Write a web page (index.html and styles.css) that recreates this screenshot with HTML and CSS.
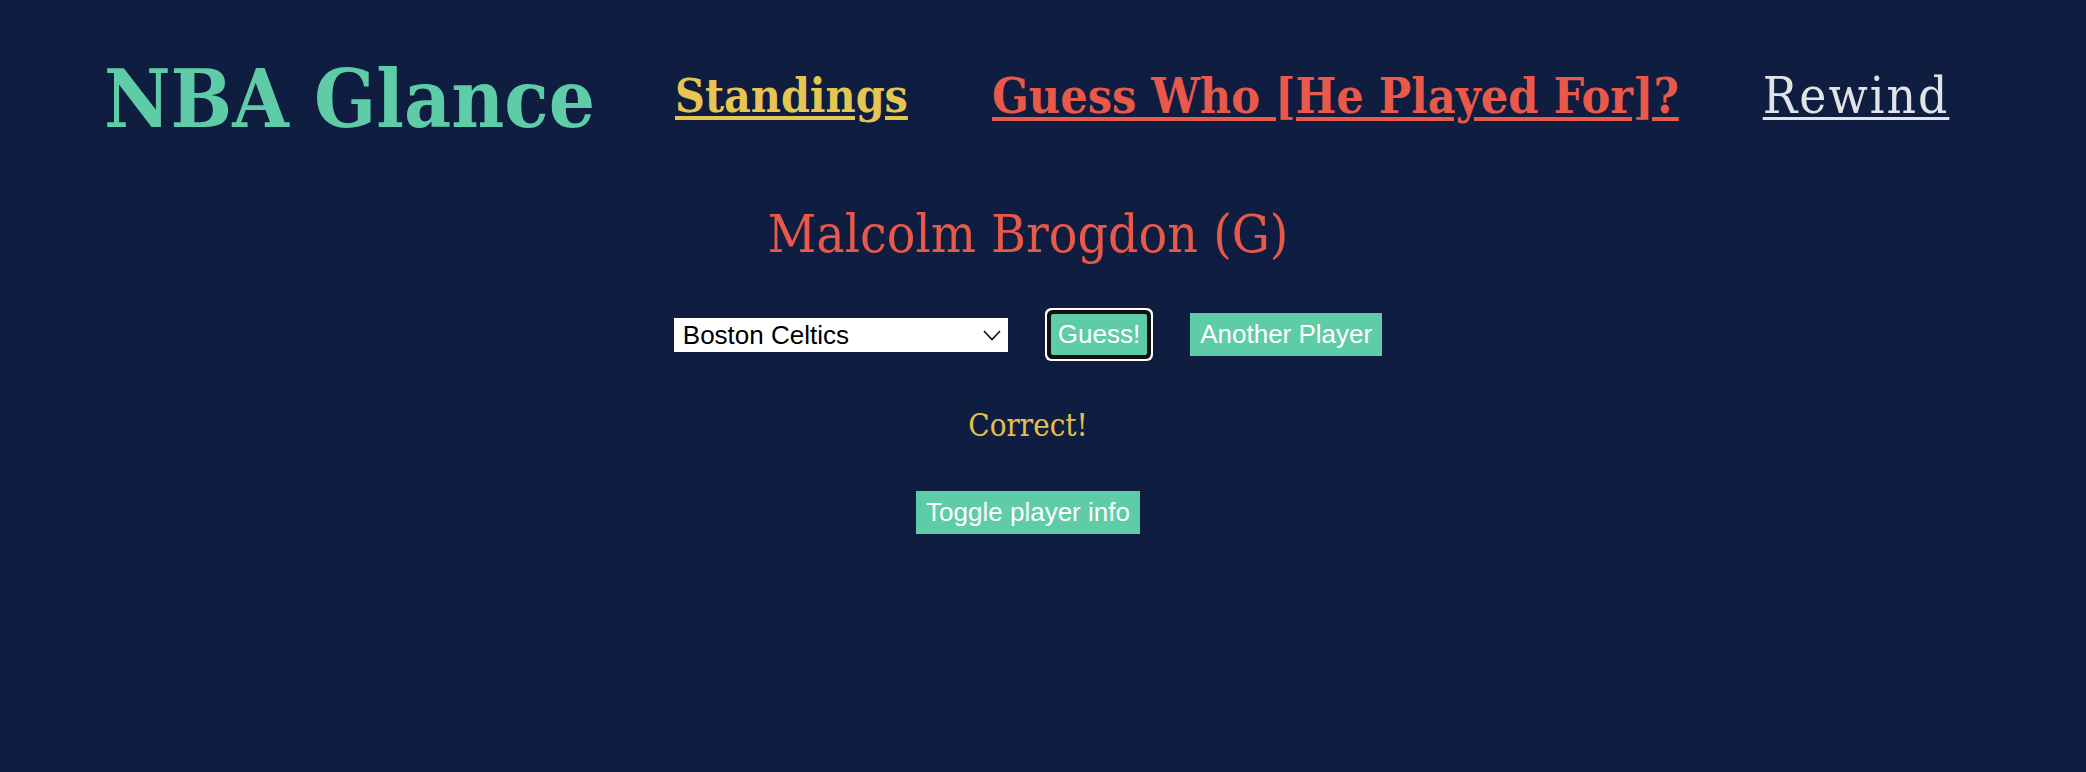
FILE: index.html
```html
<!DOCTYPE html>
<html>
<head>
    <title>NBA Glance</title>
    <link rel="stylesheet" href="styles.css">
</head>
<body>
    <div class="header">
        <h1 class="logo">NBA Glance</h1>
        <nav class="nav">
            <a href="#" class="nav-standings">Standings</a>
            <a href="#" class="nav-guess">Guess Who [He Played For]?</a>
            <a href="#" class="nav-rewind">Rewind</a>
        </nav>
    </div>

    <div class="game">
        <h2 class="player">Malcolm Brogdon (G)</h2>

        <div class="controls">
            <span class="select-wrap">
                <select id="team">
                    <option>Boston Celtics</option>
                    <option>Milwaukee Bucks</option>
                    <option>Indiana Pacers</option>
                </select>
                <svg class="chevron" width="18" height="11" viewBox="0 0 18 11">
                    <path d="M1 1 L9 9.5 L17 1" fill="none" stroke="#111" stroke-width="1.6"/>
                </svg>
            </span>
            <button class="btn btn-guess">Guess!</button>
            <button class="btn">Another Player</button>
        </div>

        <p class="result">Correct!</p>

        <button class="btn">Toggle player info</button>
    </div>
</body>
</html>
```

FILE: styles.css
```css
body { margin: 0; background: #0f1d40; font-family: "DejaVu Serif Condensed", "DejaVu Serif", serif; font-stretch: condensed; min-height: 772px; }
.header { display: flex; align-items: center; padding: 50px 0 0 104px; white-space: nowrap; }
.logo { margin: 0; font-size: 81px; font-weight: bold; color: #5ecca6; line-height: 1.2; }
.nav { display: flex; align-items: center; gap: 84px; margin: 0 0 6px 80px; }
.nav a { font-size: 46px; font-weight: bold; text-decoration-thickness: 4px; text-underline-offset: 4px; }
.nav-standings { color: #e6c652; }
.nav a.nav-guess { color: #e8594a; font-size: 48px; }
.nav a.nav-rewind { color: #e2e3e8; font-weight: normal; font-stretch: normal; font-size: 51px; letter-spacing: 2px; text-decoration-thickness: 3px; }

.game { display: flex; flex-direction: column; align-items: center; padding-right: 30px; }
.player { margin: 57px 0 0; font-size: 53px; font-weight: normal; color: #e8594a; white-space: nowrap; line-height: 1.15; }
.controls { display: flex; align-items: center; gap: 43px; margin-top: 48px; }
.select-wrap { position: relative; display: inline-block; }
select { appearance: none; width: 334px; height: 34px; border: none; border-radius: 0; background: #fff; color: #000; padding: 0 9px; font-family: "Liberation Sans", Arial, sans-serif; font-size: 26px; }
.chevron { position: absolute; right: 7px; top: 12px; pointer-events: none; }
.btn { background: #5ecca6; color: #fff; border: none; padding: 0 10px; height: 43px; font-family: "Liberation Sans", Arial, sans-serif; font-size: 26px; cursor: pointer; }
.btn-guess { height: 41px; padding: 0 7px; border-radius: 2px; box-shadow: 0 0 0 4px #111, 0 0 0 6px #fff; }
.result { margin: 51px 0 48px; font-size: 31px; color: #e2c150; }
```
